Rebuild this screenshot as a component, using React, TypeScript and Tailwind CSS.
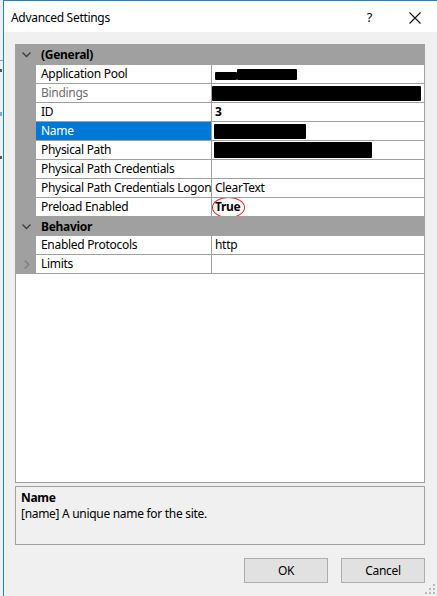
import React from 'react';

const Chevron = ({ dir }: { dir: 'down' | 'right' }) =>
  dir === 'down' ? (
    <svg width="9" height="6" viewBox="0 0 9 6" className="block">
      <path d="M0.5 0.5 L4.5 4.5 L8.5 0.5" fill="none" stroke="#3c3c3c" strokeWidth="1.3" />
    </svg>
  ) : (
    <svg width="6" height="9" viewBox="0 0 6 9" className="block">
      <path d="M0.8 0.5 L4.8 4.5 L0.8 8.5" fill="none" stroke="#7c7c7c" strokeWidth="1.3" />
    </svg>
  );

const Category = ({ label, first }: { label: string; first?: boolean }) => (
  <div className={`flex items-center bg-[#a0a0a0] ${first ? 'h-[20px]' : 'h-[19px]'}`}>
    <div className="w-[20px] flex justify-center pl-[1px]">
      <Chevron dir="down" />
    </div>
    <span className="pl-[5px] font-bold text-black">{label}</span>
  </div>
);

const Redact = ({ w, h, ml = 2 }: { w: number; h: number; ml?: number }) => (
  <div className="bg-black rounded-[1px]" style={{ width: w, height: h, marginLeft: ml }} />
);

const Row = ({
  name,
  value,
  selected,
  disabled,
  expand,
  bold,
  circle
}: {
  name: string;
  value?: React.ReactNode;
  selected?: boolean;
  disabled?: boolean;
  expand?: boolean;
  bold?: boolean;
  circle?: boolean;
}) => (
  <div className="flex h-[19px]">
    <div className="w-[20px] bg-[#a0a0a0] flex items-center justify-center pl-[2px]">
      {expand && <Chevron dir="right" />}
    </div>
    <div
      className={`w-[176px] border-b border-r border-[#a0a0a0] flex items-center pl-[5px] whitespace-nowrap overflow-hidden ${
        selected ? 'bg-[#0078d7] text-white' : disabled ? 'bg-white text-[#6d6d6d]' : 'bg-white text-black'
      }`}
    >
      {name}
    </div>
    <div className="relative flex-1 border-b border-[#a0a0a0] bg-white flex items-center pl-[3px] whitespace-nowrap overflow-hidden">
      {typeof value === 'string' ? <span className={bold ? 'font-bold' : ''}>{value}</span> : value}
      {circle && (
        <div className="absolute left-[0px] top-[-1px] w-[33px] h-[21px] rounded-[50%] border border-[#e02b2b]" />
      )}
    </div>
  </div>
);

export default function App() {
  return (
    <div className="w-[437px] h-[596px] flex overflow-hidden text-[12px] leading-[16px] tracking-[-0.3px] text-black font-['Segoe_UI','Noto_Sans',sans-serif]">
      <div className="w-[3px] bg-[#eef0f2] flex flex-col">
        <div className="h-[60px]" />
        <div className="h-[1px] bg-[#9a9a9a]" />
        <div className="h-[8px]" />
        <div className="h-[3px] w-[2px] bg-[#555]" />
        <div className="h-[40px]" />
        <div className="h-[4px] w-[2px] bg-[#7aa7d8]" />
        <div className="h-[40px]" />
        <div className="h-[3px] w-[2px] bg-[#555]" />
      </div>
      <div className="relative flex-1 flex flex-col border-l border-t border-[#1883d7] bg-[#f0f0f0]">
        <div className="h-[31px] bg-white flex items-center pl-[7px]">
          <span className="flex-1 pt-[2px]">Advanced Settings</span>
          <span className="text-[13px] mr-[37px] pt-[1px]">?</span>
          <svg width="12" height="12" viewBox="0 0 12 12" className="mr-[16px] mt-[2px]">
            <path d="M0.5 0.5 L11.5 11.5 M11.5 0.5 L0.5 11.5" stroke="#111" strokeWidth="1.1" />
          </svg>
        </div>

        <div className="flex flex-col pl-[11px] pt-[12px]">
          <div className="w-[410px] h-[439px] border border-[#a0a0a0] bg-white flex flex-col">
            <Category label="(General)" first />
            <Row
              name="Application Pool"
              value={
                <div className="flex items-end">
                  <Redact w={22} h={8} ml={0} />
                  <Redact w={60} h={11} ml={0} />
                </div>
              }
            />
            <Row name="Bindings" disabled value={<Redact w={209} h={15} ml={-3} />} />
            <Row name="ID" value="3" bold />
            <Row name="Name" selected value={<Redact w={92} h={15} ml={-1} />} />
            <Row name="Physical Path" value={<Redact w={158} h={16} ml={-1} />} />
            <Row name="Physical Path Credentials" value="" />
            <Row name="Physical Path Credentials Logon" value="ClearText" />
            <Row name="Preload Enabled" value="True" bold circle />
            <Category label="Behavior" />
            <Row name="Enabled Protocols" value="http" />
            <Row name="Limits" value="" expand />
            <div className="flex-1 bg-white" />
          </div>

          <div className="mt-[3px] w-[410px] h-[59px] border border-[#a0a0a0] bg-[#f0f0f0] px-[5px] pt-[3px]">
            <div className="font-bold">Name</div>
            <div>[name] A unique name for the site.</div>
          </div>

          <div className="w-[410px] mt-[13px] flex justify-end gap-[13px]">
            <button className="w-[84px] h-[25px] bg-[#e1e1e1] border border-[#adadad] text-black">OK</button>
            <button className="w-[84px] h-[25px] bg-[#e1e1e1] border border-[#adadad] text-black">Cancel</button>
          </div>
        </div>

        <svg width="10" height="10" viewBox="0 0 10 10" className="absolute right-[2px] bottom-[2px]">
          <rect x="8" y="0" width="2" height="2" fill="#b8b8b8" />
          <rect x="4" y="4" width="2" height="2" fill="#b8b8b8" />
          <rect x="8" y="4" width="2" height="2" fill="#b8b8b8" />
          <rect x="0" y="8" width="2" height="2" fill="#b8b8b8" />
          <rect x="4" y="8" width="2" height="2" fill="#b8b8b8" />
          <rect x="8" y="8" width="2" height="2" fill="#b8b8b8" />
        </svg>
      </div>
    </div>
  );
}
